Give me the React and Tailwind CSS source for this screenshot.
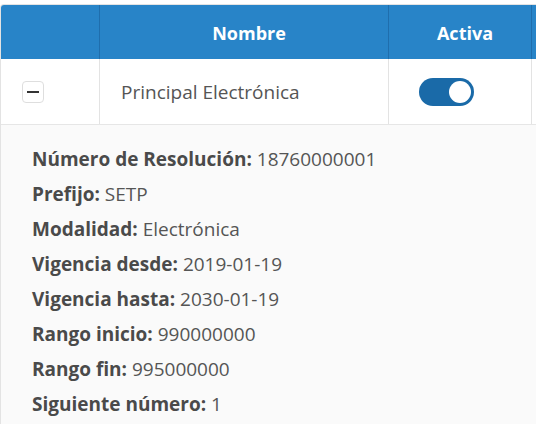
import React from 'react';

const details = [
  ['Número de Resolución:', '18760000001'],
  ['Prefijo:', 'SETP'],
  ['Modalidad:', 'Electrónica'],
  ['Vigencia desde:', '2019-01-19'],
  ['Vigencia hasta:', '2030-01-19'],
  ['Rango inicio:', '990000000'],
  ['Rango fin:', '995000000'],
  ['Siguiente número:', '1'],
];

export default function App() {
  return (
    <div
      className="w-[536px] h-[424px] overflow-hidden bg-white pt-[4px]"
      style={{ fontFamily: '"Open Sans", "Noto Sans", sans-serif' }}
    >
      <div className="w-[640px] border-l border-t border-[#e3e3e3] rounded-tl-[4px] overflow-hidden">
        {/* header */}
        <div className="flex h-[54px] bg-[#2884c8] text-white font-bold text-[18px]">
          <div className="w-[99px] border-r border-[#1f6ead]" />
          <div className="w-[289px] border-r border-[#1f6ead] flex items-center justify-center pl-[10px] pt-[2px]">Nombre</div>
          <div className="w-[143px] border-r border-[#1f6ead] flex items-center justify-center pl-[10px] pt-[2px]">Activa</div>
          <div className="flex-1" />
        </div>

        {/* row */}
        <div className="flex h-[66px] bg-white border-b border-[#e6e6e6]">
          <div className="w-[99px] border-r border-[#e3e3e3] flex items-center pl-[21px]">
            <button className="w-[22px] h-[22px] rounded-[4px] border border-[#dedede] bg-white flex items-center justify-center">
              <span className="block w-[12px] h-[2px] bg-[#333]" />
            </button>
          </div>
          <div className="w-[289px] border-r border-[#e3e3e3] flex items-center pl-[21px] pt-[2px] text-[19px] text-[#555]">
            Principal Electrónica
          </div>
          <div className="w-[143px] border-r border-[#e3e3e3] flex items-center pl-[30px]">
            <div className="w-[55px] h-[28px] rounded-full bg-[#1a6aa8] flex items-center justify-end pr-[3px]">
              <span className="block w-[22px] h-[22px] rounded-full bg-white" />
            </div>
          </div>
          <div className="flex-1" />
        </div>

        {/* expanded details */}
        <div className="bg-[#fafafa] pl-[31px] pt-[17px] h-[300px] text-[19px] text-[#555] leading-[35px]">
          {details.map(([label, value]) => (
            <div key={label}>
              <span className="font-bold text-[#4a4a4a]">{label}</span> {value}
            </div>
          ))}
        </div>
      </div>
    </div>
  );
}
